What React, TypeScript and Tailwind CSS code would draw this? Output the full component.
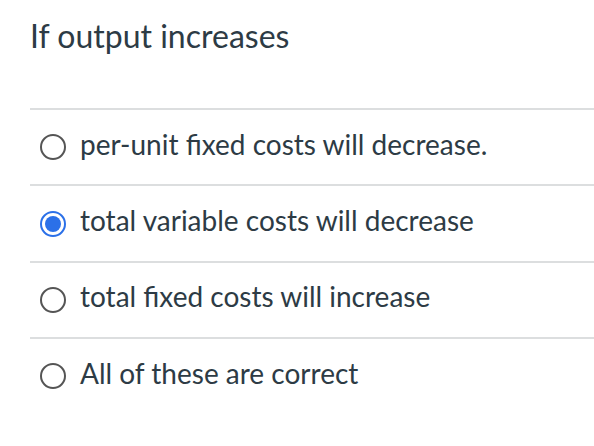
import { useState } from 'react';

const options = [
  'per-unit fixed costs will decrease.',
  'total variable costs will decrease',
  'total fixed costs will increase',
  'All of these are correct',
];

export default function App() {
  const [selected, setSelected] = useState(1);

  return (
    <div className="w-[594px] h-[446px] bg-white text-[#2d3b45] font-['Lato','Noto_Sans',sans-serif]">
      <h2 className="pl-[30px] pt-[16px] text-[32px] leading-[40px] font-normal">If output increases</h2>

      <div className="ml-[30px] mt-[52px]">
        {options.map((label, i) => (
          <label
            key={label}
            onClick={() => setSelected(i)}
            className="flex items-center h-[76.4px] border-t-2 border-[#dcdedf] cursor-pointer"
          >
            <span
              className={`flex items-center justify-center ml-[10px] w-[26px] h-[26px] rounded-full border-2 ${
                selected === i ? 'border-[#2b70e8]' : 'border-[#555555]'
              }`}
            >
              {selected === i && <span className="w-[16px] h-[16px] rounded-full bg-[#2b70e8]" />}
            </span>
            <span className="ml-[14px] text-[28px] leading-[32px] -mt-[7px]">{label}</span>
          </label>
        ))}
      </div>
    </div>
  );
}
